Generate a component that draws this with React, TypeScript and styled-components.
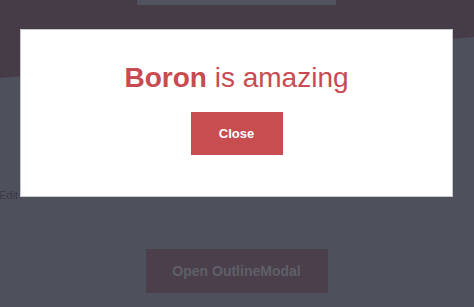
import React from "react";
import styled, { createGlobalStyle } from "styled-components";

const Global = createGlobalStyle`
  html, body { margin: 0; padding: 0; }
  body {
    background: #4e505b;
    font-family: "Liberation Sans", Arial, sans-serif;
    overflow: hidden;
  }
  #root { height: 307px; position: relative; }
`;

const Page = styled.div`
  height: 307px;
  display: flex;
  flex-direction: column;
`;

const Header = styled.header`
  height: 78px;
  background: #463c48;
  clip-path: polygon(0 0, 100% 0, 100% 37px, 0 78px);
  display: flex;
  justify-content: center;
`;

const TopTab = styled.div`
  width: 199px;
  height: 5px;
  margin-right: 1px;
  background: #50525e;
`;

const Main = styled.main`
  flex: 1;
  display: flex;
  flex-direction: column;
`;

const EditLabel = styled.div`
  margin-top: 111px;
  margin-left: -1px;
  font-size: 11px;
  line-height: 12px;
  color: #393945;
`;

const OpenButton = styled.button`
  align-self: center;
  margin-top: 48px;
  margin-right: 1px;
  width: 182px;
  height: 44px;
  border: none;
  background: #4a3f4b;
  color: #5f5f69;
  font-family: "Liberation Sans", Arial, sans-serif;
  font-weight: bold;
  font-size: 14px;
  padding: 0;
`;

const Modal = styled.div`
  position: absolute;
  left: 20px;
  top: 29px;
  width: 433px;
  height: 168px;
  box-sizing: border-box;
  background: #ffffff;
  border: 1px solid #c9c9cc;
  display: flex;
  flex-direction: column;
  align-items: center;
  padding-top: 32px;
`;

const Title = styled.h2`
  margin: 0;
  font-size: 28px;
  line-height: 32px;
  font-weight: normal;
  color: #c84b51;
`;

const Strong = styled.b`
  font-weight: bold;
`;

const CloseButton = styled.button`
  margin-top: 18px;
  width: 92px;
  height: 43px;
  border: none;
  background: #c84d50;
  color: #ffffff;
  font-family: "Liberation Sans", Arial, sans-serif;
  font-weight: bold;
  font-size: 13px;
  padding: 0;
`;

export default function App() {
  return (
    <>
      <Global />
      <Page>
        <Header>
          <TopTab />
        </Header>
        <Main>
          <EditLabel>Edit</EditLabel>
          <OpenButton>Open OutlineModal</OpenButton>
        </Main>
      </Page>
      <Modal>
        <Title>
          <Strong>Boron</Strong> is amazing
        </Title>
        <CloseButton>Close</CloseButton>
      </Modal>
    </>
  );
}
